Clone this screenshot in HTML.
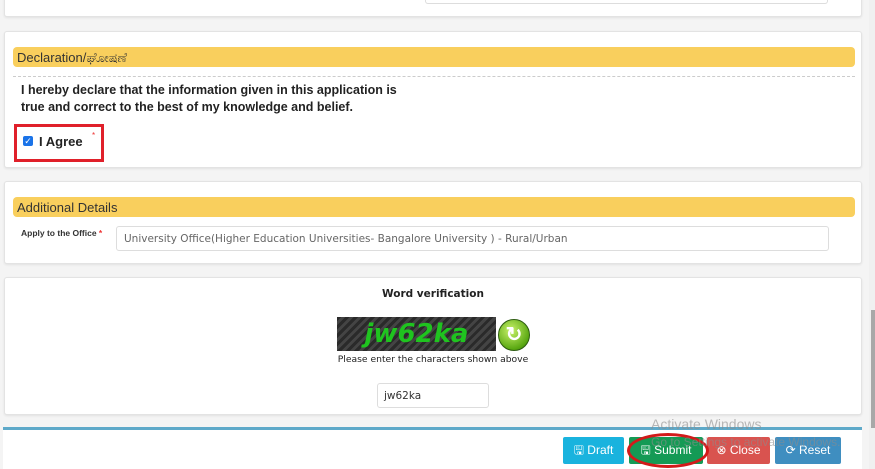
<!DOCTYPE html>
<html><head><meta charset="utf-8"><style>
*{box-sizing:border-box;margin:0;padding:0}
body{width:875px;height:469px;overflow:hidden;background:#f4f4f4;font-family:"Liberation Sans",Arial,sans-serif;position:relative}
.p{position:absolute;left:4px;width:858px;background:#fff;border:1px solid #e3e3e3;border-radius:3px;box-shadow:0 1px 2px rgba(0,0,0,.08)}
.hd{position:absolute;left:8px;width:842px;height:20px;background:#f9cf5d;border-radius:4px;font-size:13px;color:#333;padding:3px 0 0 4px}
.ab{position:absolute}
.btn{position:absolute;top:437px;height:27px;color:#fff;font-size:12px;text-align:center;line-height:27px;border-radius:2px}
</style></head><body>
<div class="p" style="top:-5px;height:22px"><div class="ab" style="left:420px;top:0;width:403px;height:8px;border:1px solid #ddd;border-top:none;border-radius:0 0 3px 3px"></div></div>

<div class="p" style="top:31px;height:137px">
 <div class="hd" style="top:15px">Declaration/<span style="font-family:'Liberation Sans',sans-serif;font-size:13px">ಘೋಷಣೆ</span></div>
 <div class="ab" style="left:8px;top:44px;width:842px;border-top:1px dashed #ccc"></div>
 <div class="ab" style="left:16px;top:50px;font-size:12.5px;font-weight:bold;color:#222;line-height:17px;font-family:'Liberation Sans',Arial,sans-serif">I hereby declare that the information given in this application is<br>true and correct to the best of my knowledge and belief.</div>
 <div class="ab" style="left:9px;top:92px;width:90px;height:38px;border:3px solid #e0202a"></div>
 <div class="ab" style="left:18px;top:104px;width:10px;height:10px;background:#1a73e8;border-radius:2px;color:#fff;font-size:9px;line-height:10px;text-align:center">✓</div>
 <div class="ab" style="left:34px;top:102px;font-size:13px;font-weight:bold;color:#222">I Agree</div>
 <div class="ab" style="left:87px;top:99px;font-size:8px;color:#e33">*</div>
</div>

<div class="p" style="top:181px;height:83px">
 <div class="hd" style="top:15px">Additional Details</div>
 <div class="ab" style="left:16px;top:46px;font-size:8.5px;font-weight:bold;color:#333">Apply to the Office <span style="color:#e33">*</span></div>
 <div class="ab" style="left:111px;top:44px;width:713px;height:25px;border:1px solid #ddd;border-radius:3px;font-size:10.5px;color:#666;padding:6px 0 0 7px;font-family:'DejaVu Sans',sans-serif">University Office(Higher Education Universities- Bangalore University ) - Rural/Urban</div>
</div>

<div class="p" style="top:277px;height:138px">
 <div class="ab" style="left:0;width:856px;top:10px;text-align:center;font-size:10.5px;font-weight:bold;color:#222;font-family:'DejaVu Sans',sans-serif">Word verification</div>
 <div class="ab" style="left:332px;top:39px;width:159px;height:34px;background:repeating-linear-gradient(135deg,#2a2a2a 0 3px,#444 3px 6px);color:#1fc41f;font-weight:bold;font-style:italic;font-size:26px;text-align:center;line-height:34px;font-family:'DejaVu Sans',sans-serif">jw62ka</div>
 <div class="ab" style="left:493px;top:41px;width:32px;height:32px;border-radius:50%;background:radial-gradient(circle at 40% 35%,#c9f26a,#5aa812 70%,#2f6d0a);border:1px solid #2d5c10;color:#fff;font-size:20px;font-weight:bold;text-align:center;line-height:30px">↻</div>
 <div class="ab" style="left:0;width:856px;top:76px;text-align:center;font-size:9.2px;color:#222;font-family:'DejaVu Sans',sans-serif">Please enter the characters shown above</div>
 <div class="ab" style="left:372px;top:105px;width:112px;height:25px;border:1px solid #ddd;border-radius:3px;font-size:10.5px;color:#333;padding:6px 0 0 6px;font-family:'DejaVu Sans',sans-serif">jw62ka</div>
</div>

<div class="ab" style="left:3px;top:427px;width:859px;height:42px;background:#fff;border-top:3px solid #5ea9c9"></div>
<div class="btn" style="left:563px;width:61px;background:#19b3de">🖫 Draft</div>
<div class="btn" style="left:629px;width:74px;background:#149a55">🖫 Submit</div>
<div class="btn" style="left:707px;width:63px;background:#d9534f">⊗ Close</div>
<div class="btn" style="left:775px;width:66px;background:#3f8ec0">⟳ Reset</div>
<div class="ab" style="left:627px;top:433px;width:82px;height:35px;border:3px solid #d21a1a;border-radius:50%"></div>
<div class="ab" style="left:651px;top:416px;font-size:14px;color:rgba(140,140,140,.6)">Activate Windows</div>
<div class="ab" style="left:651px;top:435px;font-size:12px;color:rgba(140,140,140,.6)">Go to Settings to activate Windows.</div>

<div class="ab" style="left:869px;top:0;width:6px;height:469px;background:#f0f0f0"></div>
<div class="ab" style="left:871px;top:310px;width:4px;height:118px;background:#a8a8a8"></div>
</body></html>
